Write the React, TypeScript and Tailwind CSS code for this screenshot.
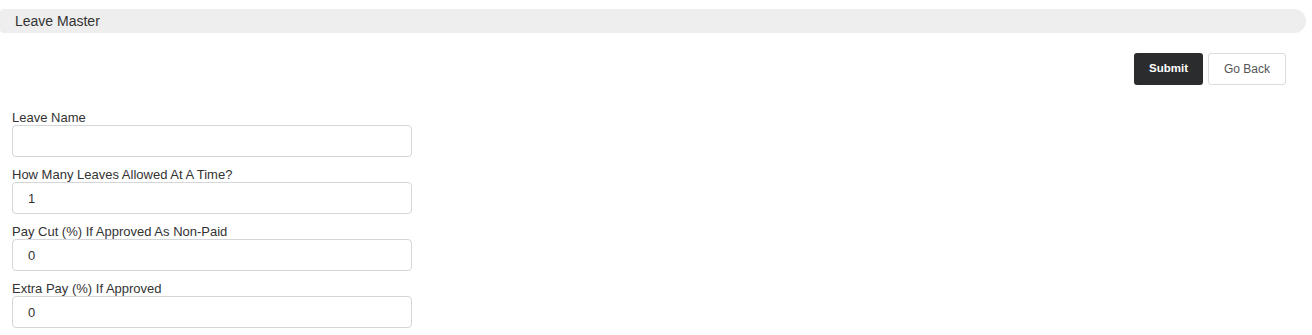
import React from "react";

const fields = [
  { label: "Leave Name", value: "" },
  { label: "How Many Leaves Allowed At A Time?", value: "1" },
  { label: "Pay Cut (%) If Approved As Non-Paid", value: "0" },
  { label: "Extra Pay (%) If Approved", value: "0" },
];

export default function App() {
  return (
    <div className="min-h-[335px] bg-white font-['Liberation_Sans',Arial,sans-serif] text-[#333]">
      <div className="pr-[6px] pt-[9px]">
        <div className="flex h-[24px] items-center rounded-l-[4px] rounded-r-[12px] bg-[#eeeeee] pl-[15px] text-[14px] text-[#333]">
          Leave Master
        </div>
      </div>

      <div className="flex justify-end gap-[5px] pr-[26px] pt-[20px]">
        <button className="h-[32px] w-[69px] rounded-[3px] bg-[#2b2c2e] text-[11.5px] font-bold text-white">
          Submit
        </button>
        <button className="h-[32px] w-[78px] rounded-[3px] border border-[#dcdcdc] bg-white text-[12px] text-[#555]">
          Go Back
        </button>
      </div>

      <div className="flex w-[412px] flex-col pl-[12px] pt-[24px]">
        {fields.map((f) => (
          <div key={f.label} className="flex flex-col">
            <label className="h-[16px] pt-[1px] text-[13px] leading-[16px] text-[#333]">{f.label}</label>
            <input
              readOnly
              value={f.value}
              className="mb-[9px] h-[32px] w-[400px] rounded-[4px] border border-[#d5d5dc] px-[15px] text-[13px] text-[#333] outline-none"
            />
          </div>
        ))}
      </div>
    </div>
  );
}
